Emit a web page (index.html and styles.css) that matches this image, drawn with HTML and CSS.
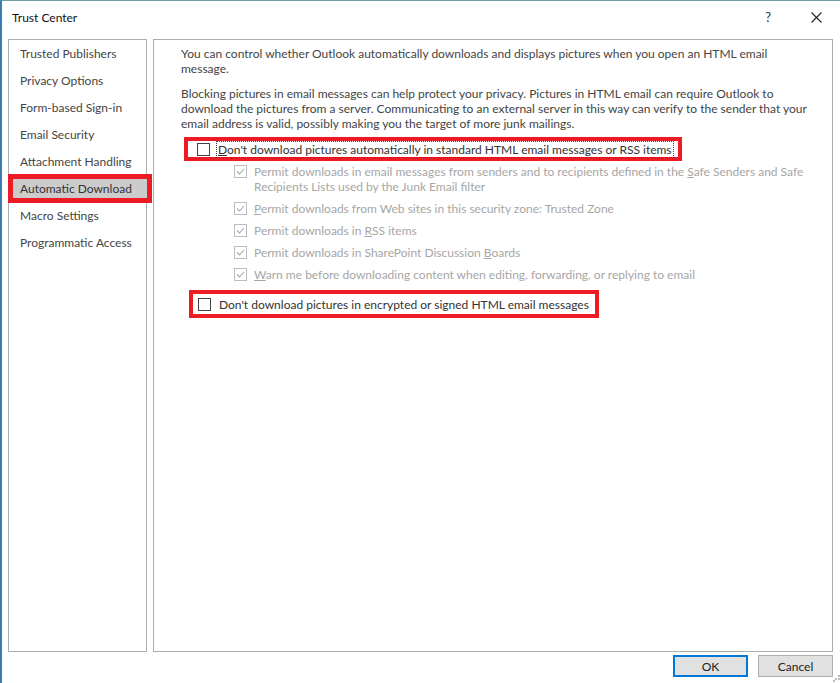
FILE: index.html
```html
<!DOCTYPE html>
<html lang="en">
<head>
    <meta charset="UTF-8">
    <title>Trust Center</title>
    <link rel="stylesheet" href="styles.css">
</head>
<body>
    <div class="dialog">
        <div class="titlebar">
            <span class="title">Trust Center</span>
            <span class="help">?</span>
            <svg class="close" width="11" height="11" viewBox="0 0 11 11"><path d="M0.5 0.5L10.5 10.5M10.5 0.5L0.5 10.5" stroke="#222" stroke-width="1.1"/></svg>
        </div>
        <div class="panels">
            <div class="nav">
                <div class="navItem">Trusted Publishers</div>
                <div class="navItem">Privacy Options</div>
                <div class="navItem">Form-based Sign-in</div>
                <div class="navItem">Email Security</div>
                <div class="navItem">Attachment Handling</div>
                <div class="navItem selected">Automatic Download</div>
                <div class="navItem">Macro Settings</div>
                <div class="navItem">Programmatic Access</div>
            </div>
            <div class="content">
                <p>You can control whether Outlook automatically downloads and displays pictures when you open an HTML email<br>message.</p>
                <p class="para2">Blocking pictures in email messages can help protect your privacy. Pictures in HTML email can require Outlook to<br>download the pictures from a server. Communicating to an external server in this way can verify to the sender that your<br>email address is valid, possibly making you the target of more junk mailings.</p>

                <div class="mark mark1">
                    <span class="box"></span>
                    <span class="label focused"><u>D</u>on't download pictures automatically in standard HTML email messages or RSS items</span>
                </div>

                <div class="subList">
                    <div class="subRow">
                        <span class="box off"><svg width="9" height="7" viewBox="0 0 9 7"><path d="M1 3.5L3.5 6L8 1" fill="none" stroke="#a8a8a8" stroke-width="1.1"/></svg></span>
                        <span class="label">Permit downloads in email messages from senders and to recipients defined in the <u>S</u>afe Senders and Safe<br>Recipients Lists used by the Junk Email filter</span>
                    </div>
                    <div class="subRow">
                        <span class="box off"><svg width="9" height="7" viewBox="0 0 9 7"><path d="M1 3.5L3.5 6L8 1" fill="none" stroke="#a8a8a8" stroke-width="1.1"/></svg></span>
                        <span class="label"><u>P</u>ermit downloads from Web sites in this security zone: Trusted Zone</span>
                    </div>
                    <div class="subRow">
                        <span class="box off"><svg width="9" height="7" viewBox="0 0 9 7"><path d="M1 3.5L3.5 6L8 1" fill="none" stroke="#a8a8a8" stroke-width="1.1"/></svg></span>
                        <span class="label">Permit downloads in <u>R</u>SS items</span>
                    </div>
                    <div class="subRow">
                        <span class="box off"><svg width="9" height="7" viewBox="0 0 9 7"><path d="M1 3.5L3.5 6L8 1" fill="none" stroke="#a8a8a8" stroke-width="1.1"/></svg></span>
                        <span class="label">Permit downloads in SharePoint Discussion <u>B</u>oards</span>
                    </div>
                    <div class="subRow">
                        <span class="box off"><svg width="9" height="7" viewBox="0 0 9 7"><path d="M1 3.5L3.5 6L8 1" fill="none" stroke="#a8a8a8" stroke-width="1.1"/></svg></span>
                        <span class="label"><u>W</u>arn me before downloading content when editing, forwarding, or replying to email</span>
                    </div>
                </div>

                <div class="mark mark2">
                    <span class="box"></span>
                    <span class="label">Don't download pictures in encrypted or signed HTML email messages</span>
                </div>
            </div>
        </div>
        <div class="footer">
            <button class="btn ok">OK</button>
            <button class="btn">Cancel</button>
            <svg class="grip" width="7" height="7" viewBox="0 0 7 7"><rect x="5" y="0" width="2" height="2" fill="#bbb"/><rect x="2" y="3" width="2" height="2" fill="#bbb"/><rect x="5" y="3" width="2" height="2" fill="#bbb"/><rect x="0" y="5" width="2" height="2" fill="#bbb"/></svg>
        </div>
    </div>
</body>
</html>
```

FILE: styles.css
```css
*{
    padding: 0px;
    margin: 0px;
    box-sizing: border-box;
}
body{
    width: 840px;
    height: 683px;
    background: #ffffff;
    font-family: "Lato", "Noto Sans", sans-serif;
    font-size: 12px;
    color: #444444;
    overflow: hidden;
}
.dialog{
    width: 840px;
    height: 683px;
    border-left: 2px solid #3a7cb5;
    border-top: 1px solid #6d9a9a;
    display: flex;
    flex-direction: column;
    position: relative;
}
.titlebar{
    height: 38px;
    display: flex;
    align-items: center;
    padding-left: 10px;
    padding-bottom: 6px;
}
.title{
    color: #111111;
    flex: 1;
}
.help{
    color: #333333;
    font-size: 13px;
    margin-right: 40px;
}
.close{
    margin-right: 18px;
}
.panels{
    display: flex;
    gap: 6px;
    padding-left: 6px;
    height: 613px;
}
.nav{
    width: 139px;
    border: 1px solid #acacac;
    padding-top: 4px;
}
.navItem{
    height: 19px;
    line-height: 19px;
    margin: 0 -1px 8px 4px;
    padding-left: 7px;
    color: #444444;
    white-space: nowrap;
}
.navItem.selected{
    background: #cccccc;
    color: #333333;
    outline: 5px solid #ed1c24;
}
.content{
    width: 680px;
    border: 1px solid #acacac;
    padding: 6px 0 0 27px;
    white-space: nowrap;
    line-height: 15px;
}
.content p{
    margin-bottom: 10px;
}
.content .para2{
    margin-bottom: 6px;
}
.mark{
    display: inline-flex;
    align-items: center;
    border: 4px solid #ed1c24;
    color: #333333;
}
.mark1{
    margin-left: 3px;
    height: 24px;
    padding: 0 4px 0 9px;
}
.mark2{
    margin: 8px 0 0 8px;
    height: 28px;
    padding: 0 4px 0 5px;
}
.box{
    width: 13px;
    height: 13px;
    border: 1px solid #444444;
    background: #ffffff;
    flex: none;
    display: flex;
    align-items: center;
    justify-content: center;
}
.mark .label{
    margin-left: 6px;
    padding: 0 1px;
    border: 1px dotted transparent;
}
.mark .label.focused{
    border-color: #444444;
}
.subList{
    margin: 3px 0 0 53px;
    color: #a6a6a6;
}
.subRow{
    display: flex;
    align-items: flex-start;
    margin-bottom: 7px;
}
.subRow:last-child{
    margin-bottom: 0;
}
.box.off{
    border-color: #bcbcbc;
    margin-top: 1px;
}
.subRow .label{
    margin-left: 7px;
}
.footer{
    display: flex;
    justify-content: flex-end;
    gap: 10px;
    padding: 3px 7px 0 0;
    position: relative;
}
.btn{
    width: 75px;
    height: 22px;
    background: #e1e1e1;
    border: 1px solid #adadad;
    font-family: "Lato", "Noto Sans", sans-serif;
    font-size: 12px;
    color: #222222;
}
.btn.ok{
    border: 2px solid #0078d7;
}
.grip{
    position: absolute;
    right: 0;
    bottom: -5px;
}
```
